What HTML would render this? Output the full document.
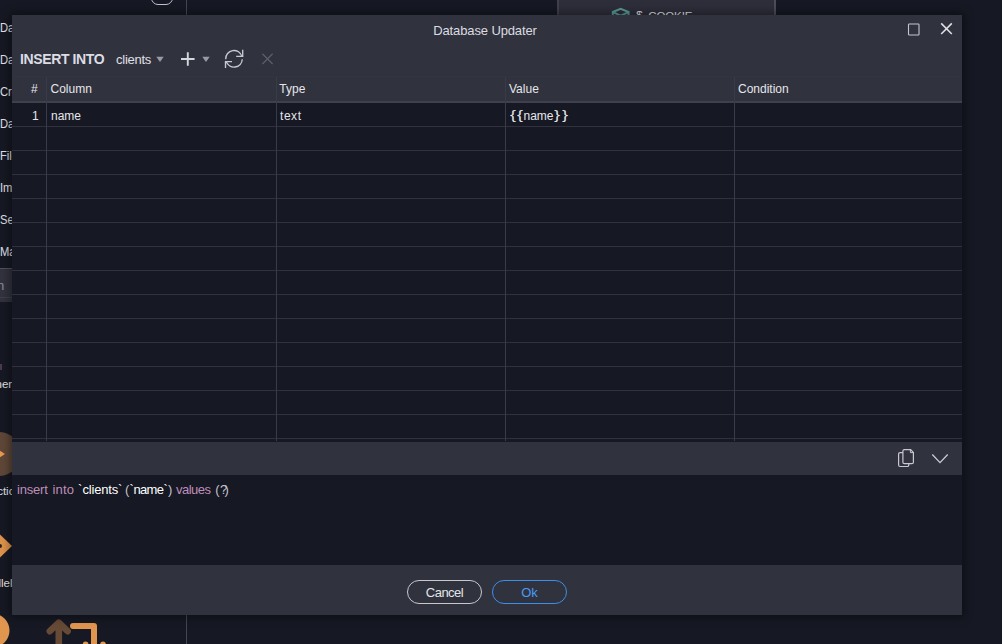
<!DOCTYPE html>
<html><head><meta charset="utf-8">
<style>
*{box-sizing:border-box;margin:0;padding:0}
html,body{width:1002px;height:644px;overflow:hidden;background:#161823;font-family:"Liberation Sans",sans-serif;color:#e4e4e8}
.abs{position:absolute}
#dlg{position:absolute;left:12px;top:15px;width:950px;height:600px;background:#30323e;box-shadow:0 0 9px 2px rgba(0,0,0,.42)}
#title{position:absolute;left:0;top:0;width:946px;height:31px;line-height:31px;text-align:center;font-size:13px;letter-spacing:-0.12px;color:#dcdce0}
#grid{position:absolute;left:0;top:61px;width:950px;height:366px;background:#161823;overflow:hidden}
#ghead{position:absolute;left:0;top:0;width:950px;height:27px;background:#30323e;border-top:1px solid #32343f;border-bottom:2px solid #3f404d}
.hl{position:absolute;left:0;width:950px;height:1px;background:#30313d}
.vl{position:absolute;top:1px;width:1px;height:364px;background:#3a3b48}
.br{transform:scaleX(1.5);transform-origin:0 0}
.t{position:absolute;font-size:12px;line-height:14px;white-space:nowrap;color:#e6e6ea}
#bar{position:absolute;left:0;top:427px;width:950px;height:33px;background:#30323e}
#sql{position:absolute;left:0;top:460px;width:950px;height:90px;background:#161823}
#sql span{position:absolute;top:7px;font-size:13px;line-height:16px;white-space:nowrap}
.kw{color:#bf8fba}.id{color:#ffffff}.pn{color:#c4c4cc}
#foot{position:absolute;left:0;top:550px;width:950px;height:50px;background:#30323e}
.btn{position:absolute;top:15px;height:24px;width:75px;border-radius:12px;border:1px solid #c8c8cc;font-size:13px;line-height:23px;text-align:center;color:#e4e4e8}
.lt{position:absolute;left:0px;margin-top:-1px;transform:scaleX(.86);transform-origin:0 0;font-size:13px;line-height:16px;color:#e2e2e6;white-space:nowrap}
svg{position:absolute;overflow:visible}
</style></head><body>
<!-- background page fragments -->
<div class="abs" style="left:186px;top:0;width:1px;height:644px;background:#454653"></div>
<div class="abs" style="left:150.5px;top:-16px;width:22px;height:21px;border:1.2px solid #c4c4cc;border-radius:7px"></div>
<div class="abs" style="left:557px;top:0;width:219px;height:20px;background:#2d2e3a;border-left:2px solid #3f404c;border-right:2px solid #4b4c5a"></div>
<svg style="left:0;top:0" width="1002" height="20"><path d="M612.8 15V12L620.6 8.8L628.6 12V15M614 12.6L620.6 15.6L627.5 12.6" fill="none" stroke="#5a9a94" stroke-width="2"/></svg>
<div class="abs" style="left:636.3px;top:7px;font-size:11.5px;line-height:16px;color:#e4e4e8">$</div>
<div class="abs" style="left:648.2px;top:8px;font-size:11.5px;line-height:16px;color:#e4e4e8;letter-spacing:-0.1px">COOKIE</div>
<div class="lt" style="top:21px">Database</div>
<div class="lt" style="top:53px">Database</div>
<div class="lt" style="top:85px">Cron</div>
<div class="lt" style="top:117px">Database</div>
<div class="lt" style="top:149px">Files</div>
<div class="lt" style="top:181px">Image</div>
<div class="lt" style="top:213px">Server</div>
<div class="lt" style="top:245px">Mail</div>
<div class="abs" style="left:0;top:268px;width:12px;height:34px;background:#31323e;border-top:1px solid #50515d"></div>
<div class="abs" style="left:0;top:297px;width:12px;height:1px;background:#3e3f4b"></div>
<div class="abs" style="left:-3px;top:278px;font-size:13px;line-height:16px;color:#8e8e96">n</div>
<div class="abs" style="left:0;top:364px;width:2px;height:6px;background:#4a3a52"></div>
<div class="abs" style="left:-4.5px;top:376.5px;font-size:11.5px;line-height:14px;color:#e2e2e6">ner</div>
<div class="abs" style="left:-23px;top:432px;width:44px;height:44px;border-radius:22px;background:#5f4738"></div>
<svg style="left:0;top:0" width="120" height="644">
 <path d="M-2 449.5L5 454L-2 458.5Z" fill="#e8994e"/>
 <path d="M-2 532.5L12 546L-2 559.5Z" fill="#dd924b"/>
 <circle cx="0" cy="546" r="2" fill="#2a2023"/>
 <circle cx="-7.5" cy="630.5" r="17" fill="#e0964f"/>
 <path d="M58.8 650V624M49.8 631.2L58.8 622.7L67.6 631.2" fill="none" stroke="#664a36" stroke-width="6.6" stroke-linecap="round" stroke-linejoin="round"/>
 <path d="M73 626H94V650" fill="none" stroke="#e0964f" stroke-width="6" stroke-linecap="round" stroke-linejoin="round"/>
 <circle cx="85.6" cy="644.3" r="2.8" fill="#e0964f"/><circle cx="103" cy="644.3" r="2.8" fill="#e0964f"/>
</svg>
<div class="abs" style="left:-10.5px;top:484px;font-size:11.5px;line-height:14px;color:#e2e2e6">Actions</div>
<div class="abs" style="left:-1.5px;top:576px;font-size:11.5px;line-height:14px;color:#e2e2e6">llel</div>

<div id="dlg">
 <div id="title">Database Updater</div>
 <!-- window buttons -->
 <svg style="left:0;top:0" width="950" height="45">
  <rect x="896.5" y="9" width="10.5" height="11" rx="0.8" fill="none" stroke="#c6c6ce" stroke-width="1.1"/>
  <path d="M929.2 8.4L939.8 19M939.8 8.4L929.2 19" stroke="#dedee4" stroke-width="1.6" fill="none"/>
 </svg>
 <!-- toolbar -->
 <div class="abs" style="left:8px;top:36px;font-size:14px;line-height:16px;font-weight:bold;color:#dcdce4;letter-spacing:-0.38px;white-space:nowrap">INSERT INTO</div>
 <div class="abs" style="left:104px;top:36.5px;font-size:13px;line-height:16px;color:#e0e0e6;letter-spacing:-0.25px">clients</div>
 <svg style="left:0;top:30px" width="300" height="30">
  <path d="M144.3 11.8H151.7L148 16.9Z" fill="#9a9aa4"/>
  <path d="M169 14H182.6M175.8 7.2V20.8" stroke="#d6d6de" stroke-width="1.9" fill="none"/>
  <path d="M190.3 11.8H197.7L194 16.9Z" fill="#9a9aa4"/>
  <!-- refresh -->
  <g fill="none" stroke="#c8c8d0" stroke-width="1.35">
   <path d="M213.700 14.200A8.300 8.300 0 0 1 230 11.600"/>
   <path d="M230.700 4.800V11.400H224.200"/>
   <path d="M230.300 14.300A8.300 8.300 0 0 1 214.200 16.600"/>
   <path d="M213.500 23V16.600H220"/>
  </g>
  <path d="M250.4 8.8L260.6 19M260.6 8.8L250.4 19" stroke="#5c5d6a" stroke-width="1.3" fill="none"/>
 </svg>
 <div id="grid">
  <div id="ghead"></div>
  <div class="hl" style="top:50px"></div><div class="hl" style="top:74px"></div><div class="hl" style="top:98px"></div><div class="hl" style="top:122px"></div><div class="hl" style="top:146px"></div><div class="hl" style="top:170px"></div><div class="hl" style="top:194px"></div><div class="hl" style="top:218px"></div><div class="hl" style="top:242px"></div><div class="hl" style="top:266px"></div><div class="hl" style="top:290px"></div><div class="hl" style="top:314px"></div><div class="hl" style="top:338px"></div><div class="hl" style="top:362px"></div>
  <div class="vl" style="left:34px"></div><div class="vl" style="left:264px"></div><div class="vl" style="left:493px"></div><div class="vl" style="left:722px"></div>
  <div class="t" style="left:19px;top:6px">#</div>
  <div class="t" style="left:38.5px;top:6px">Column</div>
  <div class="t" style="left:267.3px;top:6px">Type</div>
  <div class="t" style="left:497px;top:6px">Value</div>
  <div class="t" style="left:726px;top:6px">Condition</div>
  <div class="t" style="left:20px;top:33px">1</div>
  <div class="t" style="left:39px;top:33px">name</div>
  <div class="t" style="left:268px;top:33px;letter-spacing:0.55px">text</div>
  <div class="t br" style="left:497.5px;top:32px">{</div><div class="t br" style="left:505.2px;top:32px">{</div><div class="t" style="left:511.5px;top:33px">name</div><div class="t br" style="left:542.3px;top:32px">}</div><div class="t br" style="left:550px;top:32px">}</div>
 </div>
 <div id="bar">
  <svg style="left:0;top:0" width="950" height="33">
   <g fill="none" stroke="#c8c8d0" stroke-width="1.2">
    <path d="M892.4 7.600H898.600L901.400 10.400V20.200A1.500 1.500 0 0 1 899.900 21.700H892.400A1.500 1.500 0 0 1 890.900 20.200V9.100A1.500 1.500 0 0 1 892.400 7.600Z"/>
    <path d="M898.400 7.800V10.600H901.200" stroke-width="1"/>
    <path d="M890.900 10.600H888.100A1.500 1.500 0 0 0 886.600 12.100V23A1.500 1.500 0 0 0 888.100 24.500H895.300A1.500 1.500 0 0 0 896.800 23V21.700"/>
   </g>
   <path d="M920.300 12.500L928 20.600L935.700 12.500" fill="none" stroke="#ccccd4" stroke-width="1.3"/>
  </svg>
 </div>
 <div id="sql">
  <span class="kw" style="left:5px;letter-spacing:-0.2px">insert</span>
  <span class="kw" style="left:40.5px;letter-spacing:0.2px">into</span>
  <span class="id" style="left:66px">`</span>
  <span class="id" style="left:70.500px;letter-spacing:-0.2px">clients</span>
  <span class="id" style="left:106px">`</span>
  <span class="pn" style="left:113px">(</span>
  <span class="id" style="left:117.500px">`</span>
  <span class="id" style="left:121.500px;letter-spacing:-0.7px">name</span>
  <span class="id" style="left:151.500px">`</span>
  <span class="pn" style="left:156px">)</span>
  <span class="kw" style="left:164px;letter-spacing:-0.5px">values</span>
  <span class="pn" style="left:203.200px">(</span>
  <span class="pn" style="left:208px;letter-spacing:-0.5px">?</span>
  <span class="pn" style="left:212.600px">)</span>
 </div>
 <div id="foot">
  <div class="btn" style="left:395px;letter-spacing:-0.5px">Cancel</div>
  <div class="btn" style="left:480px;border-color:#3b8eea;color:#4a9cf5">Ok</div>
 </div>
</div>
</body></html>
